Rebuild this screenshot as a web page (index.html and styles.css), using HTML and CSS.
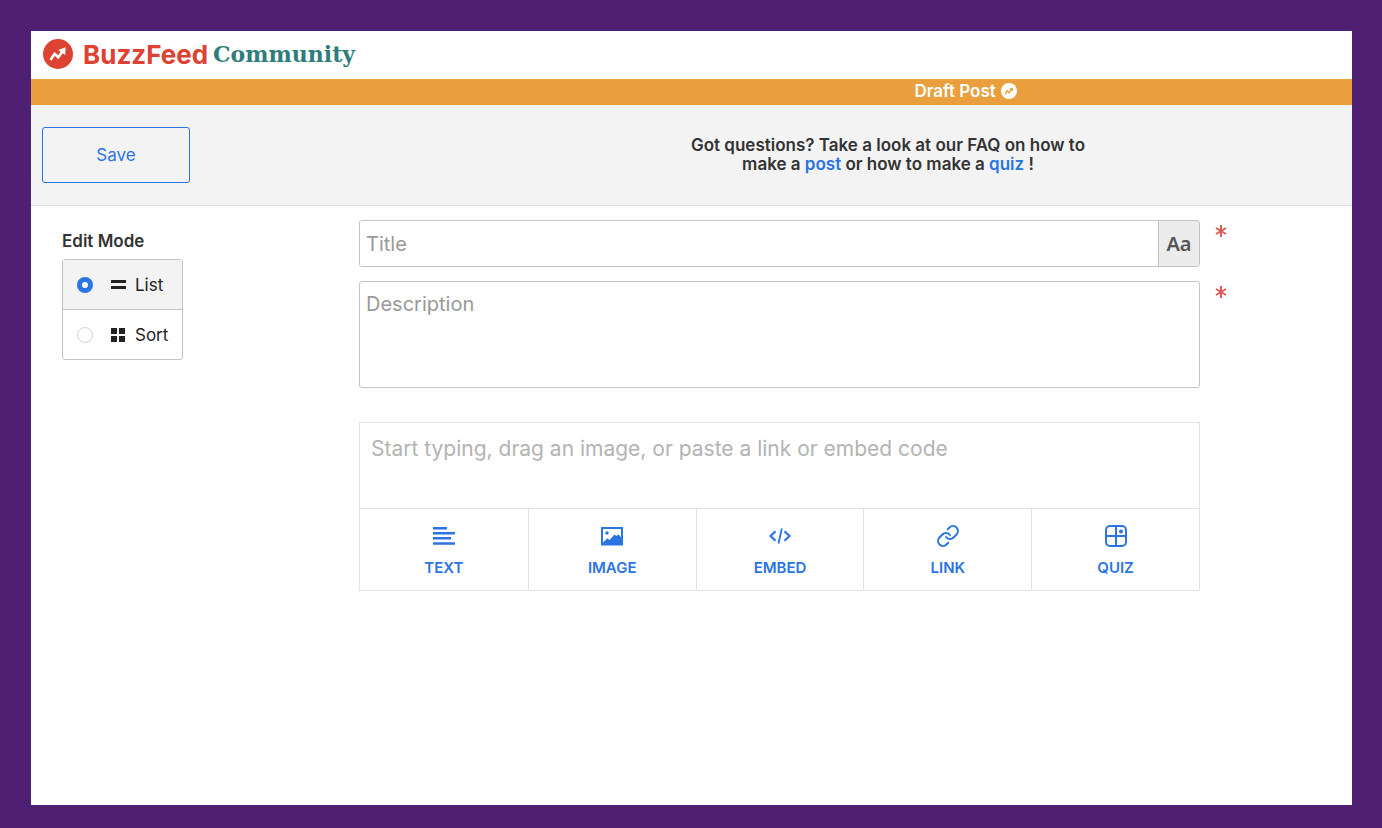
FILE: index.html
```html
<!DOCTYPE html>
<html lang="en">
<head>
  <meta charset="UTF-8" />
  <title>BuzzFeed Community</title>
  <link rel="stylesheet" href="styles.css">
</head>
<body>
  <div class="app">
    <header class="header">
      <a href="#" class="logo">
        <svg class="logo-mark" viewBox="0 0 30 30">
          <circle cx="15" cy="15" r="15" fill="#dd4233"/>
          <path d="M7.500 21 L11.600 14.800 L15.200 18.300 L19.500 12.500" fill="none" stroke="#fff" stroke-width="2.600"/>
          <path d="M15.200 10.900 L22.600 8.300 L22.200 16 Z" fill="#fff"/>
        </svg>
        <span class="logo-name">BuzzFeed</span>
        <span class="logo-community">Community</span>
      </a>
    </header>

    <div class="status">
      <span>Draft Post</span>
      <svg class="status-icon" viewBox="0 0 30 30">
        <circle cx="15" cy="15" r="15" fill="#fff"/>
        <path d="M7.500 21 L11.600 14.800 L15.200 18.300 L19.500 12.500" fill="none" stroke="#e99f3e" stroke-width="2.600"/>
        <path d="M15.200 10.900 L22.600 8.300 L22.200 16 Z" fill="#e99f3e"/>
      </svg>
    </div>

    <div class="toolbar">
      <button type="button" class="save">Save</button>
      <p class="faq">Got questions? Take a look at our FAQ on how to<br>make a <a href="#">post</a> or how to make a <a href="#">quiz</a> !</p>
    </div>

    <main class="main">
      <fieldset class="mode">
        <legend>Edit Mode</legend>
        <div class="mode-list">
          <label class="mode-item">
            <input type="radio" name="mode" checked>
            <svg width="15" height="14" viewBox="0 0 15 14" fill="#222"><path d="M0 2h15v3H0zM0 8h15v3H0z"/></svg>
            <span>List</span>
          </label>
          <label class="mode-item">
            <input type="radio" name="mode">
            <svg width="15" height="14" viewBox="0 0 15 14" fill="#222"><path d="M0 0h6v6H0zM8 0h6v6H8zM0 8h6v6H0zM8 8h6v6H8z"/></svg>
            <span>Sort</span>
          </label>
        </div>
      </fieldset>

      <form class="form">
        <div class="row">
          <div class="title-field">
            <input type="text" placeholder="Title" aria-label="Title">
            <button type="button" class="case">Aa</button>
          </div>
          <svg class="required" viewBox="0 0 12 12"><path d="M6 0v12M1 3l10 6M11 3L1 9"/></svg>
        </div>
        <div class="row">
          <textarea class="description" placeholder="Description" aria-label="Description"></textarea>
          <svg class="required" viewBox="0 0 12 12"><path d="M6 0v12M1 3l10 6M11 3L1 9"/></svg>
        </div>

        <div class="editor">
          <textarea class="editor-text" placeholder="Start typing, drag an image, or paste a link or embed code" aria-label="Content"></textarea>
          <div class="blocks">
            <button type="button">
              <svg viewBox="0 0 24 24" fill="currentColor"><path d="M1 3h14v2.500H1zM1 8h22v2.500H1zM1 13h18v2.500H1zM1 18.300h22v2.500H1z"/></svg>
              TEXT
            </button>
            <button type="button">
              <svg viewBox="0 0 24 24" fill="currentColor"><path fill-rule="evenodd" d="M1 3h22v18.500H1zM3 5v13.500l4.300-4.300 2.200 1.700 5-5.400 1.800 1.500 2-1.700 2.700 3V5z"/><circle cx="7" cy="9" r="1.700"/></svg>
              IMAGE
            </button>
            <button type="button">
              <svg viewBox="0 0 24 24" fill="none" stroke="currentColor" stroke-width="2.200"><path d="M7.500 7.200L2.500 12l5 4.800M16.500 7.200l5 4.800-5 4.800"/><path d="M13.800 4.500l-3.300 15" stroke-width="1.800"/></svg>
              EMBED
            </button>
            <button type="button">
              <svg viewBox="0 0 24 24" fill="none" stroke="currentColor" stroke-width="2" stroke-linecap="round"><path d="M10 13a5 5 0 0 0 7.540.540l3-3a5 5 0 0 0-7.070-7.070l-1.720 1.710"/><path d="M14 11a5 5 0 0 0-7.540-.540l-3 3a5 5 0 0 0 7.070 7.070l1.710-1.710"/></svg>
              LINK
            </button>
            <button type="button">
              <svg viewBox="0 0 24 24" fill="none" stroke="currentColor" stroke-width="2"><rect x="2" y="2" width="20" height="20" rx="4"/><path d="M12 2v20M2 12h20"/><circle cx="17" cy="7.500" r="2" fill="currentColor" stroke="none"/></svg>
              QUIZ
            </button>
          </div>
        </div>
      </form>
    </main>
  </div>
</body>
</html>
```

FILE: styles.css
```css
* {
  box-sizing: border-box;
}

body {
  margin: 0;
  padding: 31px 30px 23px 31px;
  min-height: 100vh;
  display: flex;
  background: #4f1f73;
  color: #333;
  font-family: Inter, sans-serif;
}

a {
  color: #2a74e4;
  text-decoration: none;
}

button,
input,
textarea {
  font-family: inherit;
  margin: 0;
}

button {
  cursor: pointer;
}

.app {
  flex: 1;
  background: #fff;
}

.header {
  height: 48px;
  padding: 0 12px 2px;
  display: flex;
  align-items: center;
}

.logo {
  display: flex;
  align-items: center;
}

.logo-mark {
  width: 30px;
  height: 30px;
  margin-right: 10px;
}

.logo-name {
  margin-right: 5px;
  color: #dd4233;
  font-size: 26px;
  font-weight: 700;
}

.logo-community {
  color: #2f7d7b;
  font-family: "DejaVu Serif", serif;
  font-size: 22px;
  font-weight: 700;
}

.status {
  height: 26px;
  padding: 0 0 2px 41.5%;
  display: flex;
  align-items: center;
  justify-content: center;
  gap: 5px;
  background: #e99f3e;
  color: #fff;
  font-size: 17px;
  font-weight: 600;
}

.status-icon {
  width: 16px;
  height: 16px;
}

.toolbar {
  padding: 22px 0 22px 11px;
  display: grid;
  grid-template-columns: 382px 1fr;
  align-items: center;
  background: #f3f3f3;
  border-bottom: 1px solid #ddd;
}

.save {
  width: 148px;
  height: 56px;
  border: 1px solid #2a74e4;
  border-radius: 3px;
  background: none;
  color: #2a74e4;
  font-size: 17px;
}

.faq {
  margin: 0;
  text-align: center;
  font-size: 17px;
  font-weight: 600;
  line-height: 19px;
}

.main {
  padding: 14px 0 0 31px;
  display: grid;
  grid-template-columns: 297px 1fr;
  align-items: start;
}

.mode {
  margin: 0;
  padding: 8px 0 0;
  border: none;
}

.mode legend {
  padding: 11px 0 0;
  font-size: 17px;
  font-weight: 600;
}

.mode-list {
  width: 121px;
  border: 1px solid #c4c4c4;
  border-radius: 3px;
}

.mode-item {
  height: 49px;
  padding-left: 14px;
  display: flex;
  align-items: center;
  font-size: 17px;
  color: #222;
}

.mode-item:first-child {
  background: #f3f3f3;
}

.mode-item + .mode-item {
  height: 50px;
  border-top: 1px solid #c4c4c4;
}

.mode-item input {
  appearance: none;
  width: 16px;
  height: 16px;
  margin-right: 18px;
  border: 1px solid #d4d4d4;
  border-radius: 50%;
}

.mode-item input:checked {
  border: 5px solid #2a74e4;
  background: #fff;
}

.mode-item svg {
  margin-right: 9px;
}

.row {
  margin-bottom: 14px;
  display: grid;
  grid-template-columns: 1fr 152px;
  align-items: start;
}

.title-field {
  height: 47px;
  display: flex;
  border: 1px solid #c4c4c4;
  border-radius: 3px;
  overflow: hidden;
}

.title-field input {
  flex: 1;
  padding: 0 6px;
  border: none;
  font-size: 20px;
}

.case {
  width: 41px;
  padding: 0;
  border: none;
  border-left: 1px solid #c4c4c4;
  background: #ececec;
  color: #555;
  font-family: "Noto Sans", sans-serif;
  font-size: 20px;
  font-weight: 600;
}

.required {
  width: 12px;
  height: 12px;
  margin: 5px 15px;
  fill: none;
  stroke: #dc5a55;
  stroke-width: 2;
}

.description {
  height: 107px;
  padding: 10px 6px;
  border: 1px solid #c4c4c4;
  border-radius: 3px;
  font-size: 20px;
  resize: none;
}

::placeholder {
  color: #999;
}

.editor {
  margin: 34px 152px 0 0;
  border: 1px solid #e2e2e2;
}

.editor-text {
  display: block;
  width: 100%;
  height: 85px;
  padding: 13px 11px;
  border: none;
  font-size: 21px;
  resize: none;
}

.editor-text::placeholder {
  color: #b3b3b3;
}

.blocks {
  display: grid;
  grid-template-columns: repeat(5, 1fr);
  border-top: 1px solid #e2e2e2;
}

.blocks button {
  height: 81px;
  padding: 2px 0 0;
  display: flex;
  flex-direction: column;
  align-items: center;
  justify-content: center;
  gap: 10px;
  border: none;
  background: none;
  color: #2a74e4;
  font-size: 15px;
  font-weight: 600;
}

.blocks button + button {
  border-left: 1px solid #e2e2e2;
}

.blocks svg {
  width: 24px;
  height: 24px;
}
```
